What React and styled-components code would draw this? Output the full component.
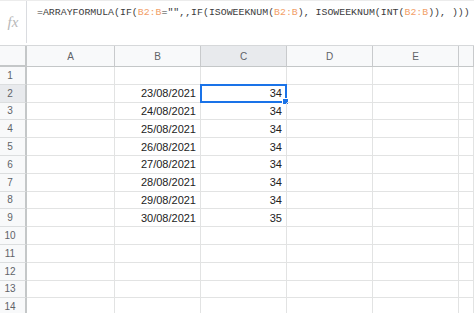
import React from "react";
import styled, { createGlobalStyle } from "styled-components";

const GlobalStyle = createGlobalStyle`
  html, body {
    margin: 0;
    padding: 0;
    background: #ffffff;
    overflow: hidden;
  }
`;

const Page = styled.div`
  width: 474px;
  height: 313px;
  overflow: hidden;
  font-family: "Liberation Sans", Arial, sans-serif;
`;

const FormulaBar = styled.div`
  display: flex;
  height: 46px;
  box-sizing: border-box;
  border-top: 1px solid #ececec;
  border-bottom: 1px solid #d6d8da;
`;

const FxBox = styled.div`
  width: 27px;
  height: 42px;
  box-sizing: border-box;
  border-right: 1px solid #dadce0;
  display: flex;
  align-items: center;
  justify-content: center;
  font-family: "Liberation Serif", serif;
  font-style: italic;
  font-size: 15px;
  color: #b8b8b8;
`;

const Formula = styled.div`
  padding: 5px 0 0 10px;
  font-family: "Liberation Mono", "DejaVu Sans Mono", monospace;
  font-size: 9.9px;
  line-height: 14px;
  color: #3c3c3c;
  white-space: nowrap;
`;

const Ref = styled.span`
  color: #f2a068;
`;

const Grid = styled.div`
  display: grid;
  grid-template-columns: 27px 88px 86px 86px 86px 86px 1fr;
  grid-template-rows: 21px repeat(14, 17.8px);
`;

const Corner = styled.div`
  background: #f8f9fa;
  border-right: 2px solid #c4c7c8;
  border-bottom: 2px solid #c4c7c8;
`;

const ColHead = styled.div`
  background: ${(p) => (p.$active ? "#e8eaed" : "#f8f9fa")};
  border-right: 1px solid #c8cacc;
  border-bottom: 1px solid #c4c7c8;
  display: flex;
  align-items: center;
  justify-content: center;
  font-size: 10px;
  color: #5f6368;
`;

const RowHead = styled.div`
  background: ${(p) => (p.$active ? "#e8eaed" : "#f8f9fa")};
  border-right: 2px solid #c4c7c8;
  border-bottom: 1px solid #dcdedf;
  display: flex;
  align-items: center;
  justify-content: center;
  padding-right: 5px;
  font-size: 10px;
  color: #5f6368;
`;

const Cell = styled.div`
  position: relative;
  border-right: 1px solid #e2e3e3;
  border-bottom: 1px solid #e2e3e3;
  display: flex;
  align-items: center;
  justify-content: flex-end;
  padding-right: 4px;
  font-size: 11px;
  color: #222222;
  white-space: nowrap;
  overflow: visible;
`;

const Selection = styled.div`
  position: absolute;
  left: -1px;
  top: -1px;
  right: -1px;
  bottom: -1px;
  border: 2px solid #1a73e8;
  pointer-events: none;
`;

const Handle = styled.div`
  position: absolute;
  right: -4px;
  bottom: -4px;
  width: 5px;
  height: 5px;
  background: #1a73e8;
  border: 1px solid #ffffff;
`;

const cols = ["A", "B", "C", "D", "E", ""];

const data = {
  2: ["23/08/2021", "34"],
  3: ["24/08/2021", "34"],
  4: ["25/08/2021", "34"],
  5: ["26/08/2021", "34"],
  6: ["27/08/2021", "34"],
  7: ["28/08/2021", "34"],
  8: ["29/08/2021", "34"],
  9: ["30/08/2021", "35"],
};

export default function App() {
  const rows = Array.from({ length: 14 }, (_, i) => i + 1);

  return (
    <Page>
      <GlobalStyle />
      <FormulaBar>
        <FxBox>fx</FxBox>
        <Formula>
          =ARRAYFORMULA(IF(<Ref>B2:B</Ref>="",,IF(ISOWEEKNUM(<Ref>B2:B</Ref>),
          ISOWEEKNUM(INT(<Ref>B2:B</Ref>)), )))
        </Formula>
      </FormulaBar>
      <Grid>
        <Corner />
        {cols.map((c, i) => (
          <ColHead key={i} $active={c === "C"}>
            {c}
          </ColHead>
        ))}
        {rows.map((r) => (
          <React.Fragment key={r}>
            <RowHead $active={r === 2}>{r}</RowHead>
            {cols.map((c, i) => (
              <Cell key={i}>
                {c === "B" && data[r] ? data[r][0] : null}
                {c === "C" && data[r] ? data[r][1] : null}
                {c === "C" && r === 2 && (
                  <Selection>
                    <Handle />
                  </Selection>
                )}
              </Cell>
            ))}
          </React.Fragment>
        ))}
      </Grid>
    </Page>
  );
}
